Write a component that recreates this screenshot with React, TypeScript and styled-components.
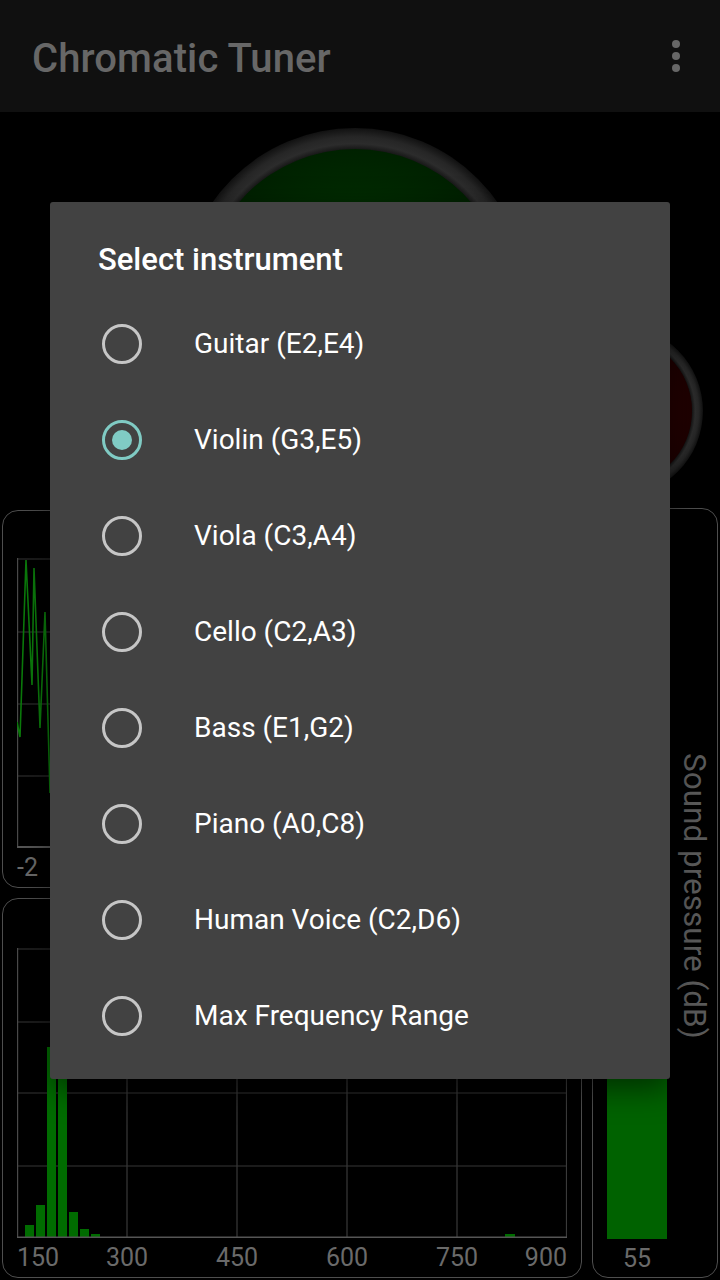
import React from 'react';
import styled, { createGlobalStyle } from 'styled-components';

const instruments = [
  { id: 'guitar', label: 'Guitar (E2,E4)' },
  { id: 'violin', label: 'Violin (G3,E5)' },
  { id: 'viola', label: 'Viola (C3,A4)' },
  { id: 'cello', label: 'Cello (C2,A3)' },
  { id: 'bass', label: 'Bass (E1,G2)' },
  { id: 'piano', label: 'Piano (A0,C8)' },
  { id: 'voice', label: 'Human Voice (C2,D6)' },
  { id: 'max', label: 'Max Frequency Range' },
];

const selectedId = 'violin';

const axisLabels: { text: string; align: 'left' | 'center' | 'right' }[] = [
  { text: '150', align: 'left' },
  { text: '300', align: 'center' },
  { text: '450', align: 'center' },
  { text: '600', align: 'center' },
  { text: '750', align: 'center' },
  { text: '900', align: 'right' },
];

// spectrum bars, x / width / top measured from the plot's top-left corner
const bars = [
  { x: 8, w: 9, top: 277 },
  { x: 19, w: 9, top: 257 },
  { x: 30, w: 9, top: 99 },
  { x: 41, w: 9, top: 90 },
  { x: 52, w: 9, top: 264 },
  { x: 63, w: 9, top: 281 },
  { x: 74, w: 9, top: 286 },
  { x: 488, w: 10, top: 286 },
];

const wavePoints = (() => {
  const pts: [number, number][] = [
    [0, 163],
    [3, 178],
    [9, 1],
    [15, 126],
    [17, 9],
    [23, 169],
    [28, 53],
    [33, 234],
  ];
  for (let x = 38; x <= 550; x += 5) {
    const y = 144 + Math.sin(x * 0.21) * 90 * Math.cos(x * 0.017) + Math.sin(x * 0.57) * 25;
    pts.push([x, Math.max(2, Math.min(286, y))]);
  }
  return pts.map(([x, y]) => `${x},${y.toFixed(1)}`).join(' ');
})();

export default function App() {
  return (
    <>
      <GlobalStyle />
      <Screen>
        <AppBar>
          <AppTitle>Chromatic Tuner</AppTitle>
          <MenuButton aria-label="More options">
            <Dot />
            <Dot />
            <Dot />
          </MenuButton>
        </AppBar>

        <GaugeArea>
          <svg width="720" height="396" viewBox="0 0 720 396">
            <defs>
              <radialGradient id="ring" cx="50%" cy="50%" r="50%">
                <stop offset="86%" stopColor="#0c0c0c" />
                <stop offset="91%" stopColor="#2c2c2c" />
                <stop offset="95%" stopColor="#262626" />
                <stop offset="100%" stopColor="#111111" />
              </radialGradient>
              <radialGradient id="greenLamp" cx="50%" cy="45%" r="55%">
                <stop offset="0%" stopColor="#003a00" />
                <stop offset="100%" stopColor="#001c00" />
              </radialGradient>
              <radialGradient id="redLamp" cx="50%" cy="50%" r="55%">
                <stop offset="0%" stopColor="#300000" />
                <stop offset="100%" stopColor="#1c0000" />
              </radialGradient>
            </defs>
            <circle cx="355" cy="190" r="174" fill="url(#ring)" />
            <circle cx="355" cy="190" r="153" fill="url(#greenLamp)" />
            <circle cx="617" cy="299" r="86" fill="url(#ring)" />
            <circle cx="617" cy="299" r="75" fill="url(#redLamp)" />
          </svg>
        </GaugeArea>

        <Panels>
          <LeftColumn>
            <Panel $height={378} $padTop={47}>
              <Plot $height={290}>
                <svg width="550" height="290" viewBox="0 0 550 290">
                  {[1, 74, 146, 218].map((y) => (
                    <line key={y} x1="0" x2="550" y1={y} y2={y} stroke="#363636" strokeWidth="1.2" />
                  ))}
                  {[110, 220, 330, 440, 550].map((x) => (
                    <line key={x} x1={x} x2={x} y1="0" y2="289" stroke="#363636" strokeWidth="1.2" />
                  ))}
                  <line x1="0.6" x2="0.6" y1="0" y2="289" stroke="#4a4a4a" strokeWidth="1.2" />
                  <polyline points={wavePoints} fill="none" stroke="#0b7a0b" strokeWidth="1.6" transform="translate(0,1)" />
                  <line x1="0" x2="550" y1="289" y2="289" stroke="#555555" strokeWidth="2" />
                </svg>
              </Plot>
              <AxisRow>
                <AxisLabel $align="left" $basis={55}>-2</AxisLabel>
              </AxisRow>
            </Panel>

            <Panel $height={380} $padTop={49}>
              <Plot $height={290}>
                <svg width="550" height="290" viewBox="0 0 550 290">
                  {[1, 74, 145, 218].map((y) => (
                    <line key={y} x1="0" x2="550" y1={y} y2={y} stroke="#363636" strokeWidth="1.2" />
                  ))}
                  {[110, 220, 330, 440, 549.5].map((x) => (
                    <line key={x} x1={x} x2={x} y1="0" y2="289" stroke="#3a3a3a" strokeWidth="1.2" />
                  ))}
                  <line x1="0.6" x2="0.6" y1="0" y2="289" stroke="#4a4a4a" strokeWidth="1.2" />
                  {bars.map((b) => (
                    <rect key={b.x} x={b.x} y={b.top} width={b.w} height={289 - b.top} fill="#006c00" />
                  ))}
                  <line x1="0" x2="550" y1="289.5" y2="289.5" stroke="#555555" strokeWidth="2" />
                </svg>
              </Plot>
              <AxisRow>
                {axisLabels.map((l) => (
                  <AxisLabel key={l.text} $align={l.align} $basis={l.align === 'center' ? 110 : 55}>
                    {l.text}
                  </AxisLabel>
                ))}
              </AxisRow>
            </Panel>
          </LeftColumn>

          <MeterPanel>
            <MeterColumn>
              <MeterBar style={{ height: `${Math.round((55 / 90) * 390)}px` }} />
              <MeterValue>55</MeterValue>
            </MeterColumn>
            <MeterCaption>Sound pressure (dB)</MeterCaption>
          </MeterPanel>
        </Panels>

        <Scrim>
          <Dialog role="dialog" aria-labelledby="dlg-title">
            <DialogTitle id="dlg-title">Select instrument</DialogTitle>
            <OptionList>
              {instruments.map((item) => {
                const checked = item.id === selectedId;
                return (
                  <Option key={item.id}>
                    <Radio $checked={checked}>{checked && <RadioDot />}</Radio>
                    <OptionText>{item.label}</OptionText>
                  </Option>
                );
              })}
            </OptionList>
          </Dialog>
        </Scrim>
      </Screen>
    </>
  );
}

const GlobalStyle = createGlobalStyle`
  html, body {
    margin: 0;
    padding: 0;
    background: #000;
  }
  body {
    font-family: Roboto, "Noto Sans", sans-serif;
  }
  * {
    box-sizing: border-box;
  }
`;

const Screen = styled.div`
  position: relative;
  width: 720px;
  height: 1280px;
  overflow: hidden;
  background: #000;
`;

const AppBar = styled.header`
  height: 112px;
  display: flex;
  align-items: center;
  justify-content: space-between;
  padding: 4px 32px 0 32px;
  background: #101010;
`;

const AppTitle = styled.h1`
  margin: 0;
  font-family: Roboto, sans-serif;
  font-size: 40px;
  font-weight: 500;
  color: #676767;
  letter-spacing: 0.1px;
`;

const MenuButton = styled.div`
  display: flex;
  flex-direction: column;
  gap: 4px;
  margin-right: 8px;
  margin-top: -4px;
`;

const Dot = styled.span`
  width: 8px;
  height: 8px;
  border-radius: 50%;
  background: #676767;
`;

const GaugeArea = styled.div`
  height: 396px;
  svg {
    display: block;
  }
`;

const Panels = styled.div`
  display: flex;
  gap: 10px;
  padding: 0 2px 2px 2px;
`;

const LeftColumn = styled.div`
  width: 580px;
  padding-top: 2px;
  display: flex;
  flex-direction: column;
  gap: 10px;
`;

const Panel = styled.section<{ $height: number; $padTop: number }>`
  height: ${({ $height }) => $height}px;
  padding: ${({ $padTop }) => $padTop}px 14px 0 14px;
  border: 1.5px solid #4e4e4e;
  border-radius: 16px;
  display: flex;
  flex-direction: column;
`;

const Plot = styled.div<{ $height: number }>`
  height: ${({ $height }) => $height}px;
  svg {
    display: block;
  }
`;

const AxisRow = styled.div`
  display: flex;
  height: 38px;
  align-items: center;
`;

const AxisLabel = styled.span<{ $align: 'left' | 'center' | 'right'; $basis: number }>`
  flex: 0 0 ${({ $basis }) => $basis}px;
  text-align: ${({ $align }) => $align};
  font-family: Roboto, sans-serif;
  font-size: 25px;
  color: #6a6a6a;
  white-space: nowrap;
`;

const MeterPanel = styled.section`
  flex: 1;
  height: 770px;
  border: 1.5px solid #4e4e4e;
  border-radius: 16px;
  display: flex;
  padding: 0 0 0 14px;
`;

const MeterColumn = styled.div`
  width: 60px;
  display: flex;
  flex-direction: column;
  justify-content: flex-end;
  align-items: stretch;
`;

const MeterBar = styled.div`
  background: #006200;
`;

const MeterValue = styled.div`
  height: 38px;
  display: flex;
  align-items: center;
  justify-content: center;
  font-family: Roboto, sans-serif;
  font-size: 25px;
  color: #6a6a6a;
`;

const MeterCaption = styled.div`
  flex: 1;
  display: flex;
  align-items: center;
  justify-content: center;
  writing-mode: vertical-rl;
  font-family: Roboto, sans-serif;
  font-size: 31.5px;
  color: #5a5a5a;
  padding-left: 4px;
  padding-top: 6px;
`;

const Scrim = styled.div`
  position: absolute;
  inset: 0;
  display: flex;
  align-items: center;
  justify-content: center;
`;

const Dialog = styled.div`
  width: 620px;
  background: #424242;
  border-radius: 3px;
  padding: 38px 0 15px 0;
  box-shadow: 0 10px 30px rgba(0, 0, 0, 0.5);
`;

const DialogTitle = styled.h2`
  margin: 0 0 16px 0;
  padding: 0 48px;
  height: 40px;
  line-height: 40px;
  font-family: Roboto, sans-serif;
  font-size: 31px;
  font-weight: 500;
  color: #ffffff;
`;

const OptionList = styled.div`
  display: flex;
  flex-direction: column;
`;

const Option = styled.div`
  height: 96px;
  display: flex;
  align-items: center;
  padding-left: 52px;
  gap: 52px;
`;

const Radio = styled.span<{ $checked: boolean }>`
  width: 40px;
  height: 40px;
  flex: 0 0 40px;
  border-radius: 50%;
  border: 3.5px solid ${({ $checked }) => ($checked ? '#80cbc4' : '#c6c6c6')};
  display: flex;
  align-items: center;
  justify-content: center;
`;

const RadioDot = styled.span`
  width: 20px;
  height: 20px;
  border-radius: 50%;
  background: #80cbc4;
`;

const OptionText = styled.span`
  font-family: Roboto, sans-serif;
  font-size: 28px;
  color: #ffffff;
`;
